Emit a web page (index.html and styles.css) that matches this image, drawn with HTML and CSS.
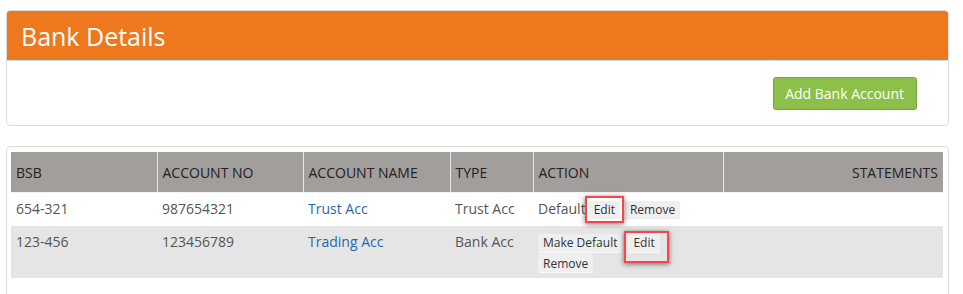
FILE: index.html
```html
<!DOCTYPE html>
<html>
<head>
<meta charset="utf-8">
<link rel="stylesheet" href="styles.css">
</head>
<body>
<div class="page">
  <section class="panel">
    <header class="panel-head"><h1 class="panel-title">Bank Details</h1></header>
    <div class="panel-body toolbar">
      <button class="btn-green">Add Bank Account</button>
    </div>
  </section>

  <section class="panel panel-table">
    <table class="grid">
      <colgroup>
        <col class="c-bsb"><col class="c-no"><col class="c-name"><col class="c-type"><col class="c-action"><col class="c-stmt">
      </colgroup>
      <thead>
        <tr><th>BSB</th><th>ACCOUNT NO</th><th>ACCOUNT NAME</th><th>TYPE</th><th>ACTION</th><th class="right">STATEMENTS</th></tr>
      </thead>
      <tbody>
        <tr>
          <td>654-321</td><td>987654321</td><td><a class="link" href="#">Trust Acc</a></td><td>Trust Acc</td>
          <td class="actions">Default<span class="mark mark-a"><button class="btn-sm">Edit</button></span><button class="btn-sm gap-l">Remove</button></td>
          <td></td>
        </tr>
        <tr class="alt">
          <td>123-456</td><td>123456789</td><td><a class="link" href="#">Trading Acc</a></td><td>Bank Acc</td>
          <td class="actions"><button class="btn-sm">Make Default</button><span class="mark mark-b"><button class="btn-sm">Edit</button></span><br><button class="btn-sm">Remove</button></td>
          <td></td>
        </tr>
      </tbody>
    </table>
  </section>
</div>
</body>
</html>
```

FILE: styles.css
```css
html, body {
  margin: 0;
  padding: 0;
  background: #fff;
}
body {
  font-family: "Open Sans", "Liberation Sans", sans-serif;
  font-size: 14px;
  color: #555;
}
.page {
  padding: 10px 14px 0 6px;
}
.panel {
  border: 1px solid #dddddd;
  border-radius: 4px;
  background: #fff;
  overflow: hidden;
}
.panel-head {
  background: #ee781d;
  border-bottom: 1px solid #bfe4ee;
  height: 49px;
  display: flex;
  align-items: center;
  padding-left: 14px;
}
.panel-title {
  margin: 0;
  font-weight: 400;
  font-size: 25px;
  color: #fff;
  line-height: 30px;
}
.toolbar {
  display: flex;
  justify-content: flex-end;
  padding: 16px 31px 15px 0;
}
.btn-green {
  font-family: "Open Sans", "Liberation Sans", sans-serif;
  font-size: 14px;
  color: #fff;
  background: #8cc04b;
  border: 1px solid #74a73a;
  border-radius: 3px;
  height: 33px;
  padding: 0 12px 0 11px;
  cursor: pointer;
}
.panel-table {
  margin-top: 20px;
  padding: 5px 5px 30px 4px;
  border-bottom-left-radius: 0;
  border-bottom-right-radius: 0;
}
.grid {
  width: 932px;
  border-collapse: collapse;
  table-layout: fixed;
}
.c-bsb { width: 146px; }
.c-no { width: 146px; }
.c-name { width: 147px; }
.c-type { width: 83px; }
.c-action { width: 190px; }
.c-stmt { width: 220px; }
.grid th {
  background: #a29e9b;
  color: #222;
  font-weight: 400;
  text-align: left;
  height: 39px;
  padding: 1px 5px 0 5px;
  border-left: 1px solid #e8e8e8;
  border-bottom: 1px solid #f4f4f4;
  vertical-align: middle;
}
.grid th:first-child { border-left: none; }
.grid th.right { text-align: right; }
.grid td {
  padding: 6px 5px 6px 5px;
  line-height: 20px;
  vertical-align: top;
  white-space: nowrap;
}
.grid tr.alt td {
  background: #e5e5e5;
  padding-bottom: 5px;
}
.link {
  color: #2567ad;
  text-decoration: none;
}
.actions {
  line-height: 22px;
}
.btn-sm {
  font-family: "Open Sans", "Liberation Sans", sans-serif;
  font-size: 12px;
  color: #333;
  background: #efefef;
  border: none;
  border-bottom: 1px solid #fafafa;
  border-radius: 2px;
  height: 19px;
  line-height: 17px;
  padding: 0 5px;
  vertical-align: middle;
  cursor: pointer;
}
.gap-l { margin-left: 5px; }
.mark {
  position: relative;
  display: inline-block;
  vertical-align: middle;
  line-height: 0;
}
.mark-a { margin-left: 3px; }
.mark-b { margin-left: 6px; }
.mark::after {
  content: "";
  position: absolute;
  border: 2px solid #f2474b;
  box-shadow: 0 1px 5px rgba(0, 0, 0, 0.55);
  pointer-events: none;
}
.mark-a::after { left: -4px; right: -4px; top: -5px; bottom: -3px; }
.mark-b::after { left: -4px; right: -9px; top: -3px; bottom: -10px; }
```
